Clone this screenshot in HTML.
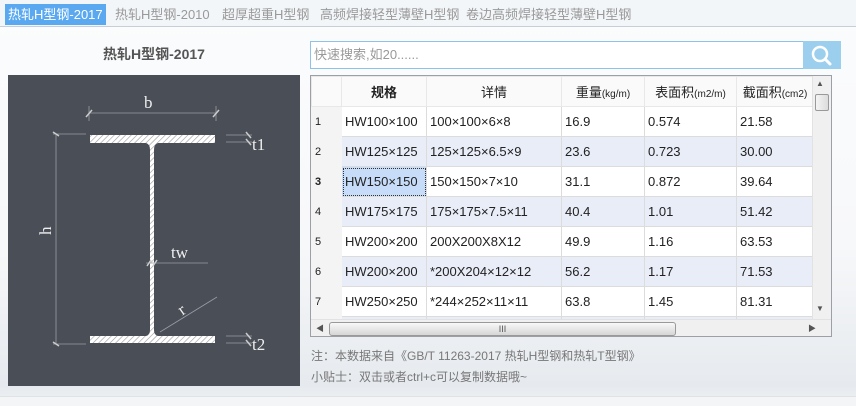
<!DOCTYPE html>
<html><head><meta charset="utf-8"><style>
*{margin:0;padding:0;box-sizing:border-box}
body{width:856px;height:406px;overflow:hidden;background:linear-gradient(#fbfcfd,#f7f8fa 60%,#e6eaee 95%,#f0f2f4);font-family:"Liberation Sans","Noto Sans CJK SC",sans-serif;position:relative;color:#333}
.abs{position:absolute}
.tabs{left:0;top:0;width:856px;height:27px;background:#f3f6f9;border-bottom:1px solid #c9ced6}
.tab{position:absolute;top:4px;height:21px;line-height:21px;font-size:13px;color:#999;white-space:nowrap}
.tab.on{background:#5aa9f0;color:#fff;padding:0 3px}
.title{left:8px;width:292px;top:44px;text-align:center;font-size:14px;font-weight:bold;color:#555}
.panel{left:8px;top:75px;width:292px;height:311px;background:#4a4e57}
.search{left:310px;top:41px;width:494px;height:28px;border:1px solid #8ec2e6;background:#fff;font-size:13px;color:#999;padding-left:3px;line-height:26px}
.btn{left:803px;top:41px;width:38px;height:28px;background:#9ccfee}
.grid{left:310px;top:75px;width:522px;height:262px;border:1px solid #9aa0a6;background:#fff;overflow:hidden}
table{border-collapse:collapse;position:absolute;left:0;top:0;font-size:13px}
td{height:30px;border:1px solid #dcdcdc;padding-left:3px;white-space:nowrap;color:#222}
td.n{background:#f4f4f4;border-color:#f4f4f4;font-size:11px;width:30px;padding-left:3px}
tr.h td{height:30px;text-align:center;background:#fafafa;border-color:#e8e8e8;padding:0}
tr.alt td{background:#e9edf8}
tr.alt td.n{background:#f4f4f4}
.note{left:311px;font-size:12px;color:#777}
</style></head><body>
<div class="abs tabs">
<div class="tab on" style="left:5px">热轧H型钢-2017</div>
<div class="tab" style="left:115px">热轧H型钢-2010</div>
<div class="tab" style="left:222px">超厚超重H型钢</div>
<div class="tab" style="left:320px">高频焊接轻型薄壁H型钢</div>
<div class="tab" style="left:466px">卷边高频焊接轻型薄壁H型钢</div>
</div>
<div class="abs title">热轧H型钢-2017</div>
<div class="abs panel">
<svg width="292" height="311" viewBox="8 75 292 311">
<defs><pattern id="hp" width="4" height="4" patternUnits="userSpaceOnUse" patternTransform="rotate(45)"><rect width="4" height="4" fill="#fff"/><line x1="0" y1="0" x2="0" y2="4" stroke="#999" stroke-width="1.2"/></pattern></defs>
<path d="M90 135H215V143H158Q154 144 154 150V330Q154 335 158 336H215V343H90V336H146Q150 335 150 330V150Q150 144 146 143H90Z" fill="url(#hp)"/>
<g stroke="#9a9da3" stroke-width="0.8" fill="none">
<line x1="89" y1="113" x2="216" y2="113"/><line x1="89" y1="106" x2="89" y2="121"/><line x1="216" y1="106" x2="216" y2="121"/>
<line x1="56" y1="134" x2="56" y2="344"/><line x1="53" y1="134" x2="86" y2="134"/><line x1="53" y1="344" x2="86" y2="344"/>
<line x1="226" y1="135" x2="252" y2="135"/><line x1="226" y1="142" x2="252" y2="142"/>
<line x1="226" y1="336" x2="252" y2="336"/><line x1="226" y1="343" x2="252" y2="343"/>
<line x1="146" y1="263" x2="208" y2="263"/>
<line x1="160" y1="332" x2="217" y2="297"/>
</g>
<g stroke="#ccc" stroke-width="1.5">
<line x1="86" y1="117" x2="92" y2="110"/><line x1="213" y1="117" x2="219" y2="110"/>
<line x1="53" y1="132" x2="59" y2="136"/><line x1="53" y1="342" x2="59" y2="346"/>
<line x1="246" y1="132" x2="251" y2="138"/><line x1="246" y1="139" x2="251" y2="145"/>
<line x1="246" y1="333" x2="251" y2="339"/><line x1="246" y1="340" x2="251" y2="346"/>
<line x1="147" y1="266" x2="151" y2="260"/><line x1="153" y1="266" x2="157" y2="260"/>
</g>
<g fill="#eee" font-family="Liberation Serif,serif" font-size="17">
<text x="144" y="108">b</text><text x="252" y="150">t1</text><text x="252" y="350">t2</text>
<text x="171" y="258">tw</text>
<text x="178" y="314" transform="rotate(-35 183 308)">r</text>
<text x="50" y="246" transform="rotate(-90 45 240)">h</text>
</g>
</svg>
</div>
<div class="abs search">快速搜索,如20......</div>
<div class="abs btn"><svg width="38" height="28"><circle cx="17" cy="13" r="7" stroke="#fff" stroke-width="2.5" fill="none"/><line x1="22" y1="18" x2="27" y2="23" stroke="#fff" stroke-width="3" stroke-linecap="round"/></svg></div>
<div class="abs grid">
<table>
<tr class="h"><td class="n" style="width:30px"></td><td style="width:85px;font-weight:bold">规格</td><td style="width:135px">详情</td><td style="width:83px">重量<span style="font-size:10px">(kg/m)</span></td><td style="width:92px">表面积<span style="font-size:10px">(m2/m)</span></td><td style="width:77px">截面积<span style="font-size:10px">(cm2)</span></td></tr>
<tr><td class="n">1</td><td>HW100×100</td><td>100×100×6×8</td><td>16.9</td><td>0.574</td><td>21.58</td></tr>
<tr class="alt"><td class="n">2</td><td>HW125×125</td><td>125×125×6.5×9</td><td>23.6</td><td>0.723</td><td>30.00</td></tr>
<tr><td class="n" style="font-weight:bold">3</td><td style="background:#c6dcf8;outline:1px dotted #333;outline-offset:-2px">HW150×150</td><td>150×150×7×10</td><td>31.1</td><td>0.872</td><td>39.64</td></tr>
<tr class="alt"><td class="n">4</td><td>HW175×175</td><td>175×175×7.5×11</td><td>40.4</td><td>1.01</td><td>51.42</td></tr>
<tr><td class="n">5</td><td>HW200×200</td><td>200X200X8X12</td><td>49.9</td><td>1.16</td><td>63.53</td></tr>
<tr class="alt"><td class="n">6</td><td>HW200×200</td><td>*200X204×12×12</td><td>56.2</td><td>1.17</td><td>71.53</td></tr>
<tr><td class="n">7</td><td>HW250×250</td><td>*244×252×11×11</td><td>63.8</td><td>1.45</td><td>81.31</td></tr>
<tr class="alt"><td class="n">8</td><td></td><td></td><td></td><td></td><td></td></tr>
</table>
<div class="abs" style="left:501px;top:0;width:20px;height:243px;background:#f0f0f0;border-left:1px solid #e2e2e2">
<div class="abs" style="left:3px;top:3px;font-size:8px;color:#555">▲</div>
<div class="abs" style="left:2px;top:18px;width:14px;height:17px;background:linear-gradient(90deg,#f4f4f4,#dcdcdc);border:1px solid #999;border-radius:2px"></div>
<div class="abs" style="left:3px;top:228px;font-size:8px;color:#555">▼</div>
</div>
<div class="abs" style="left:0;top:243px;width:521px;height:18px;background:#f0f0f0;border-top:1px solid #e2e2e2">
<div class="abs" style="left:5px;top:3px;font-size:8px;color:#555">◀</div>
<div class="abs" style="left:18px;top:2px;width:347px;height:14px;background:linear-gradient(#f8f8f8,#d6d6d6);border:1px solid #999;border-radius:3px;text-align:center;font-size:9px;line-height:12px;color:#555">III</div>
<div class="abs" style="left:497px;top:3px;font-size:8px;color:#555">▶</div>
</div>
</div>
<div class="abs note" style="top:347px">注：本数据来自《GB/T 11263-2017 热轧H型钢和热轧T型钢》</div>
<div class="abs note" style="top:368px">小贴士：双击或者ctrl+c可以复制数据哦~</div>
<div class="abs" style="left:0;top:396px;width:856px;height:10px;background:#f4f5f6;border-top:1px solid #e0e3e6"></div>
</body></html>
